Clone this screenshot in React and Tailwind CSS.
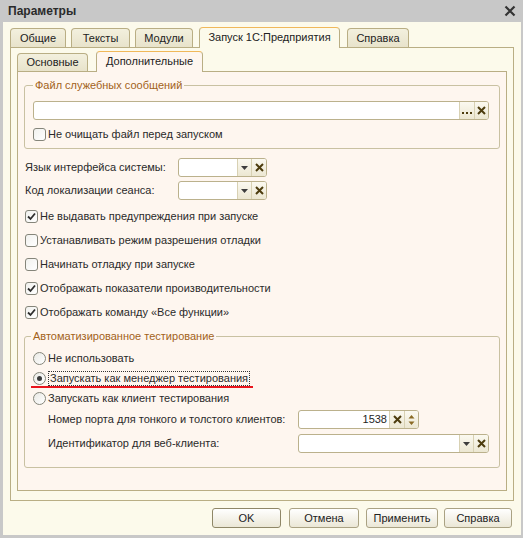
import React from "react";

const font = { fontFamily: '"Liberation Sans", Arial, sans-serif' };

const XIcon = ({ className = "w-[9px] h-[9px]" }) => (
  <svg viewBox="0 0 9 9" className={className}>
    <path d="M1 1 L8 8 M8 1 L1 8" stroke="#4d3c0e" strokeWidth="2" fill="none" />
  </svg>
);

const Arrow = () => (
  <svg viewBox="0 0 7 4" className="w-[7px] h-[4px]">
    <path d="M0 0 H7 L3.5 4 Z" fill="#3d3d3d" />
  </svg>
);

const Spin = () => (
  <svg viewBox="0 0 7 12" className="w-[7px] h-[12px]">
    <path d="M0.5 4.5 H6.5 L3.5 1 Z M0.5 7.5 H6.5 L3.5 11 Z" fill="#8a6a25" />
  </svg>
);

const Dots = () => (
  <svg viewBox="0 0 11 3" className="w-[11px] h-[3px] mt-[6px]">
    <rect x="0" y="0" width="2" height="2" fill="#4d3c0e" />
    <rect x="4" y="0" width="2" height="2" fill="#4d3c0e" />
    <rect x="8" y="0" width="2" height="2" fill="#4d3c0e" />
  </svg>
);

const FieldBtn = ({ children, w = "w-[15px]" }) => (
  <div className={`${w} h-full flex items-center justify-center border-l border-[#d8d1b3] bg-gradient-to-b from-[#fbf9f0] to-[#ece7d2]`}>
    {children}
  </div>
);

const Field = ({ className, value, buttons }) => (
  <div className={`flex h-[19px] border border-[#bbb18c] rounded-[3px] bg-white overflow-hidden ${className}`}>
    <div className="flex-1 flex items-center justify-end pr-[2px] text-[11px] text-[#1e1e1e]">{value}</div>
    {buttons}
  </div>
);

const Checkbox = ({ checked }) => (
  <div className="w-[13px] h-[13px] shrink-0 rounded-[3px] border border-[#85857a] bg-gradient-to-br from-[#f1f1ee] to-white flex items-center justify-center">
    {checked && (
      <svg viewBox="0 0 9 9" className="w-[9px] h-[9px]">
        <path d="M1 4.5 L3.5 7 L8 1.5" stroke="#2e2e2e" strokeWidth="1.8" fill="none" />
      </svg>
    )}
  </div>
);

const Radio = ({ checked }) => (
  <div className="w-[13px] h-[13px] shrink-0 rounded-full border border-[#85857a] bg-gradient-to-br from-[#e9e9e4] to-white flex items-center justify-center">
    {checked && <div className="w-[5px] h-[5px] rounded-full bg-[#3a3a3a]" />}
  </div>
);

const CheckRow = ({ checked, label }) => (
  <div className="h-[24px] flex items-center gap-[2px] text-[11px] text-[#2a2a2a]">
    <Checkbox checked={checked} />
    <span>{label}</span>
  </div>
);

const Tab = ({ label, active, w, ml, inner }) =>
  active ? (
    <div
      className={`${w} ${ml} h-[21px] relative z-10 flex items-center justify-center border border-b-0 border-[#b9ae84] border-t-[#f0b85a] rounded-t-[4px] text-[11px] text-[#222] ${inner ? "bg-[#fef6ef]" : "bg-[#fcfaeb]"}`}
    >
      <span className="-mt-[2px]">{label}</span>
    </div>
  ) : (
    <div
      className={`${w} ${ml} ${inner ? "h-[18px]" : "h-[19px]"} mb-px flex items-center justify-center border border-b-0 border-[#b9ae84] rounded-t-[4px] bg-gradient-to-b from-[#f3f0de] to-[#e8e3cb] text-[11px] text-[#222]`}
    >
      <span>{label}</span>
    </div>
  );

const BottomBtn = ({ label, w, ml, def }) => (
  <div
    className={`${w} ${ml} h-[20px] flex items-center justify-center rounded-[3px] border ${def ? "border-[#8f8767]" : "border-[#aaa283]"} bg-gradient-to-b from-white to-[#ebe7d6] text-[11px] text-[#222]`}
  >
    {label}
  </div>
);

export default function App() {
  return (
    <div className="w-[523px] h-[538px] bg-[#c8c8c8] flex flex-col" style={font}>
      <div className="h-[22px] flex items-center justify-between pl-[8px] pr-[7px]">
        <span className="text-[12px] font-bold text-[#2a2a2a]">Параметры</span>
        <svg viewBox="0 0 12 12" className="w-[12px] h-[12px]">
          <path d="M1.5 1.5 L10.5 10.5 M10.5 1.5 L1.5 10.5" stroke="#333" strokeWidth="2.2" fill="none" />
        </svg>
      </div>
      <div className="ml-[3px] mr-[2px] h-[513px] bg-[#fcfaeb] px-[7px] pt-[5px] flex flex-col">
        <div className="flex items-end h-[21px] -mb-px">
          <Tab label="Общие" w="w-[56px]" ml="ml-0" />
          <Tab label="Тексты" w="w-[59px]" ml="ml-[5px]" />
          <Tab label="Модули" w="w-[58px]" ml="ml-[5px]" />
          <Tab label="Запуск 1С:Предприятия" w="w-[141px]" ml="ml-[6px]" active />
          <Tab label="Справка" w="w-[62px]" ml="ml-[7px]" />
        </div>
        <div className="h-[454px] border border-[#b9ae84] bg-[#fcfaeb] pt-[3px] px-[6px] flex flex-col">
          <div className="flex items-end h-[21px] -mb-px">
            <Tab label="Основные" w="w-[71px]" ml="ml-0" inner />
            <Tab label="Дополнительные" w="w-[107px]" ml="ml-[8px]" active inner />
          </div>
          <div className="h-[420px] border border-[#b9ae84] bg-[#fef6ef] px-[6px] flex flex-col">
            <fieldset className="mt-[6px] border border-[#c9c1a2] rounded-[3px] pl-[8px] pr-[10px] pb-[7px]">
              <legend className="ml-0 px-[2px] text-[11px] leading-[14px] text-[#a2621a]">
                Файл служебных сообщений
              </legend>
              <Field
                className="mt-[9px]"
                buttons={
                  <>
                    <FieldBtn w="w-[15px]">
                      <Dots />
                    </FieldBtn>
                    <FieldBtn w="w-[14px]">
                      <XIcon />
                    </FieldBtn>
                  </>
                }
              />
              <div className="mt-[7px] h-[14px] flex items-center gap-[2px] text-[11px] text-[#2a2a2a]">
                <Checkbox />
                <span>Не очищать файл перед запуском</span>
              </div>
            </fieldset>

            <div className="mt-[9px] h-[19px] flex items-center pl-[1px] text-[11px] text-[#2a2a2a]">
              <span className="w-[153px]">Язык интерфейса системы:</span>
              <Field
                className="w-[89px]"
                buttons={
                  <>
                    <FieldBtn w="w-[14px]">
                      <Arrow />
                    </FieldBtn>
                    <FieldBtn w="w-[15px]">
                      <XIcon />
                    </FieldBtn>
                  </>
                }
              />
            </div>
            <div className="mt-[4px] h-[19px] flex items-center pl-[1px] text-[11px] text-[#2a2a2a]">
              <span className="w-[153px]">Код локализации сеанса:</span>
              <Field
                className="w-[89px]"
                buttons={
                  <>
                    <FieldBtn w="w-[14px]">
                      <Arrow />
                    </FieldBtn>
                    <FieldBtn w="w-[15px]">
                      <XIcon />
                    </FieldBtn>
                  </>
                }
              />
            </div>

            <div className="mt-[4px] pl-[1px] flex flex-col">
              <CheckRow checked label="Не выдавать предупреждения при запуске" />
              <CheckRow label="Устанавливать режим разрешения отладки" />
              <CheckRow label="Начинать отладку при запуске" />
              <CheckRow checked label="Отображать показатели производительности" />
              <CheckRow checked label="Отображать команду «Все функции»" />
            </div>

            <fieldset className="mt-[5px] border border-[#c9c1a2] rounded-[3px] pl-[8px] pr-[10px] pb-[14px]">
              <legend className="-ml-[2px] px-[2px] text-[11px] leading-[14px] text-[#a2621a]">
                Автоматизированное тестирование
              </legend>
              <div className="mt-[5px] h-[20px] flex items-center gap-[2px] text-[11px] text-[#2a2a2a]">
                <Radio />
                <span>Не использовать</span>
              </div>
              <div className="relative h-[20px] flex items-center gap-[2px] text-[11px] text-[#2a2a2a]">
                <Radio checked />
                <span className="border border-dotted border-[#333] px-[1px] leading-[13px]">
                  Запускать как менеджер тестирования
                </span>
                <div className="absolute left-[-2px] top-[18px] w-[222px] h-[2px] bg-[#e8141c]" />
              </div>
              <div className="h-[21px] flex items-center gap-[2px] text-[11px] text-[#2a2a2a]">
                <Radio />
                <span>Запускать как клиент тестирования</span>
              </div>
              <div className="mt-[1px] h-[19px] flex items-center pl-[15px] text-[11px] text-[#2a2a2a]">
                <span className="w-[250px] whitespace-nowrap">Номер порта для тонкого и толстого клиентов:</span>
                <Field
                  className="w-[121px]"
                  value="1538"
                  buttons={
                    <>
                      <FieldBtn w="w-[15px]">
                        <XIcon />
                      </FieldBtn>
                      <FieldBtn w="w-[14px]">
                        <Spin />
                      </FieldBtn>
                    </>
                  }
                />
              </div>
              <div className="mt-[5px] h-[19px] flex items-center pl-[15px] text-[11px] text-[#2a2a2a]">
                <span className="w-[250px] whitespace-nowrap">Идентификатор для веб-клиента:</span>
                <Field
                  className="flex-1"
                  buttons={
                    <>
                      <FieldBtn w="w-[14px]">
                        <Arrow />
                      </FieldBtn>
                      <FieldBtn w="w-[15px]">
                        <XIcon />
                      </FieldBtn>
                    </>
                  }
                />
              </div>
            </fieldset>
          </div>
        </div>
        <div className="mt-[7px] flex justify-end pr-[2px]">
          <BottomBtn label="OK" w="w-[69px]" ml="ml-0" def />
          <BottomBtn label="Отмена" w="w-[70px]" ml="ml-[8px]" />
          <BottomBtn label="Применить" w="w-[72px]" ml="ml-[7px]" />
          <BottomBtn label="Справка" w="w-[68px]" ml="ml-[6px]" />
        </div>
      </div>
    </div>
  );
}
